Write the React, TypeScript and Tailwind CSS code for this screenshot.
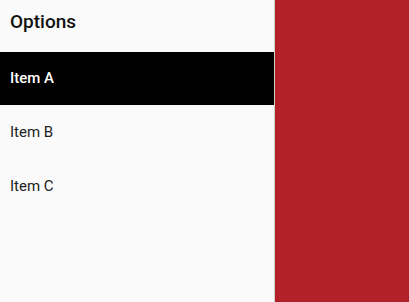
export default function App() {
  const items = ["Item A", "Item B", "Item C"];
  return (
    <div className="flex h-[302px] w-[409px] bg-[#b22028] font-['Roboto',sans-serif]">
      <div className="flex w-[275px] flex-col border-r border-[#d0d0d0] bg-[#fafafa]">
        <div className="flex h-[52px] items-center px-[10px] pb-[7px] text-[19px] font-medium text-[#111]">Options</div>
        {items.map((it, i) => (
          <div
            key={it}
            className={
              i === 0
                ? "flex h-[53px] items-center bg-black px-[10px] text-[15px] font-medium text-white"
                : "flex h-[54px] items-center px-[10px] pt-[1px] text-[15px] text-[#222]"
            }
          >
            {it}
          </div>
        ))}
      </div>
      <div className="flex-1" />
    </div>
  );
}
